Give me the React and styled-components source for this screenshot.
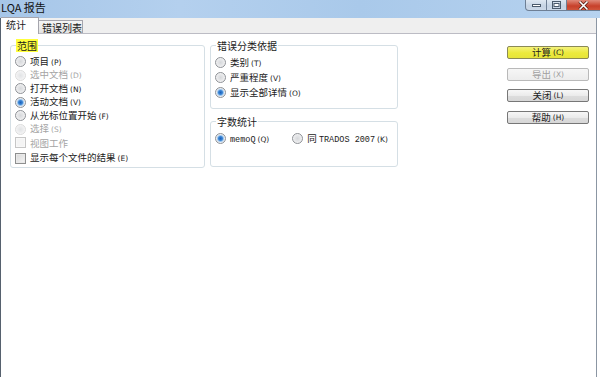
import React from "react";
import styled, { createGlobalStyle, css } from "styled-components";

const Global = createGlobalStyle`
  html, body {
    margin: 0;
    padding: 0;
    background: #ffffff;
  }
  body {
    font-family: "Noto Sans CJK SC", "DejaVu Sans", sans-serif;
    font-size: 9.5px;
    line-height: 12px;
    color: #1a1a1a;
  }
`;

const Window = styled.div`
  width: 600px;
  height: 377px;
  display: flex;
  flex-direction: column;
  overflow: hidden;
  background: #ffffff;
`;

const TitleBar = styled.div`
  height: 18px;
  flex: none;
  display: flex;
  align-items: flex-start;
  background: linear-gradient(90deg, #a6c6e8 0%, #b4d0ee 30%, #a9c9ea 60%, #b6d2ef 100%);
`;

const Title = styled.div`
  font-size: 11px;
  line-height: 14px;
  padding: 0 0 0 1px;
  white-space: nowrap;
  color: #111;
`;

const Controls = styled.div`
  margin-left: auto;
  display: flex;
  height: 11px;
`;

const CtrlBtn = styled.div`
  width: ${(p) => p.$w}px;
  height: 11px;
  box-sizing: border-box;
  border: 1px solid #6e7f95;
  border-top: none;
  border-left-width: ${(p) => (p.$first ? 1 : 0)}px;
  border-right: ${(p) => (p.$close ? "none" : "1px solid #6e7f95")};
  border-bottom-left-radius: ${(p) => (p.$first ? 4 : 0)}px;
  display: flex;
  align-items: center;
  justify-content: center;
  background: ${(p) =>
    p.$close
      ? "linear-gradient(#e08a7a, #c7402a 60%, #d0563c)"
      : "linear-gradient(#dfe8f3, #c5d3e4 60%, #ccd9e8)"};
`;

const Body = styled.div`
  flex: 1;
  display: flex;
  flex-direction: column;
  border-left: 1px solid #56616e;
  border-right: 1px solid #8b96a3;
  margin-right: 3px;
`;

const TabStrip = styled.div`
  height: 15px;
  flex: none;
  display: flex;
  align-items: flex-end;
  background: #efefef;
  border-bottom: 1px solid #bcbcc4;
`;

const Tab = styled.div`
  box-sizing: border-box;
  flex: none;
  white-space: nowrap;
  height: ${(p) => (p.$active ? 17 : 13)}px;
  font-size: 10px;
  line-height: 12px;
  display: flex;
  align-items: center;
  border: 1px solid #a5a5ad;
  border-left: none;
  border-bottom: none;
  ${(p) =>
    p.$active
      ? css`
          width: 38px;
          padding: 0 0 2px 5px;
          background: #ffffff;
          margin-bottom: -1px;
        `
      : css`
          width: 44px;
          padding: 1px 0 0 3px;
          background: linear-gradient(#f5f5f5, #e2e2e2);
        `}
`;

const Content = styled.div`
  flex: 1;
  display: flex;
  align-items: flex-start;
  padding: 5px 7px 0 9px;
`;

const Column = styled.div`
  display: flex;
  flex-direction: column;
  gap: ${(p) => p.$gap || 0}px;
  width: ${(p) => p.$w}px;
  margin-right: ${(p) => p.$mr || 0}px;
`;

const Group = styled.fieldset`
  margin: 0;
  padding: ${(p) => p.$pt || 2}px 0 ${(p) => p.$pb || 0}px 3px;
  border: 1px solid #d5dfe5;
  border-radius: 3px;
  min-height: ${(p) => p.$h}px;
  box-sizing: border-box;
`;

const Legend = styled.legend`
  padding: 0 1px;
  margin-left: 2px;
  font-size: 10px;
  line-height: 13px;
  background: ${(p) => (p.$hl ? "#ffff3c" : "transparent")};
  color: #1a1a1a;
`;

const Row = styled.div`
  display: flex;
  align-items: center;
  height: ${(p) => p.$h || 13.5}px;
  gap: 4px;
  white-space: nowrap;
  color: ${(p) => (p.$disabled ? "#a4a4a4" : "#1a1a1a")};
  margin-top: ${(p) => p.$mt || 0}px;
  margin-right: ${(p) => p.$mr || 0}px;
`;

const Inline = styled.div`
  display: flex;
  align-items: center;
`;

const Acc = styled.span`
  font-family: "DejaVu Sans", sans-serif;
  font-size: 7.5px;
  margin-left: 2px;
`;

const Mono = styled.span`
  font-family: "Liberation Mono", "DejaVu Sans Mono", monospace;
  font-size: 8.5px;
`;

const RadioDot = styled.span`
  width: 11px;
  height: 11px;
  box-sizing: border-box;
  border-radius: 50%;
  border: 1px solid ${(p) => (p.$disabled ? "#cdcdcd" : "#8e9196")};
  background: ${(p) =>
    p.$checked
      ? "radial-gradient(circle, #1d5fb8 0, #3b86d6 2px, #9cc4ec 3px, #e9eef3 4px)"
      : "radial-gradient(circle, #d6d8db 0, #e6e7e9 3px, #f6f6f6 5px)"};
  opacity: ${(p) => (p.$disabled ? 0.7 : 1)};
  flex: none;
  margin-left: 1px;
`;

const CheckBox = styled.span`
  width: 11px;
  height: 11px;
  box-sizing: border-box;
  border: 1px solid ${(p) => (p.$disabled ? "#c6c6c6" : "#8e8f8f")};
  background: ${(p) =>
    p.$disabled ? "#f4f4f4" : "linear-gradient(135deg, #d8d8d8, #f5f5f5)"};
  box-shadow: inset 0 0 0 1px ${(p) => (p.$disabled ? "#f8f8f8" : "#e9e9e9")};
  flex: none;
  margin-left: 1px;
`;

const Buttons = styled.div`
  margin-left: auto;
  display: flex;
  flex-direction: column;
  gap: 8.5px;
  padding-top: 7px;
`;

const Button = styled.div`
  width: 82px;
  height: 13px;
  box-sizing: border-box;
  border: 1px solid ${(p) => (p.$primary ? "#8b8a55" : p.$disabled ? "#b9b9b9" : "#777")};
  border-radius: 2px;
  display: flex;
  align-items: center;
  justify-content: center;
  font-size: 9.5px;
  line-height: 11px;
  color: ${(p) => (p.$disabled ? "#a0a0a0" : "#1a1a1a")};
  background: ${(p) =>
    p.$primary
      ? "linear-gradient(#f4f27a, #ecea3c 55%, #e6e43a)"
      : p.$disabled
      ? "linear-gradient(#f6f6f6, #ececec)"
      : "linear-gradient(#f7f7f7, #ebebeb 50%, #dddddd 51%, #d7d7d7)"};
`;

function Label({ text, acc }) {
  return (
    <span>
      {text}
      <Acc>({acc})</Acc>
    </span>
  );
}

const scope = [
  { text: "项目", acc: "P" },
  { text: "选中文档", acc: "D", disabled: true },
  { text: "打开文档", acc: "N" },
  { text: "活动文档", acc: "V", checked: true },
  { text: "从光标位置开始", acc: "F" },
  { text: "选择", acc: "S", disabled: true },
];

const errorBy = [
  { text: "类别", acc: "T" },
  { text: "严重程度", acc: "V" },
  { text: "显示全部详情", acc: "O", checked: true },
];

export default function App() {
  return (
    <Window>
      <Global />
      <TitleBar>
        <Title>LQA 报告</Title>
        <Controls>
          <CtrlBtn $w={22} $first>
            <svg width="9" height="3" viewBox="0 0 9 3">
              <rect x="0.5" y="0.5" width="8" height="2" fill="#fff" stroke="#4b5a6c" />
            </svg>
          </CtrlBtn>
          <CtrlBtn $w={20}>
            <svg width="9" height="8" viewBox="0 0 9 8">
              <rect x="0.5" y="0.5" width="8" height="7" fill="none" stroke="#4b5a6c" />
              <rect x="2" y="2.5" width="5" height="3" fill="#fff" stroke="#4b5a6c" />
            </svg>
          </CtrlBtn>
          <CtrlBtn $w={33} $close>
            <svg width="11" height="9" viewBox="0 0 11 9">
              <path d="M1.5 0.5 L9.5 8.5 M9.5 0.5 L1.5 8.5" stroke="#4a1a12" strokeWidth="3" />
              <path d="M1.5 0.5 L9.5 8.5 M9.5 0.5 L1.5 8.5" stroke="#fff" strokeWidth="1.6" />
            </svg>
          </CtrlBtn>
        </Controls>
      </TitleBar>
      <Body>
        <TabStrip>
          <Tab $active>统计</Tab>
          <Tab>错误列表</Tab>
        </TabStrip>
        <Content>
          <Column $w={195} $mr={5}>
            <Group $h={121} $pt={3} $pb={2}>
              <Legend $hl>范围</Legend>
              {scope.map((r) => (
                <Row key={r.text} $disabled={r.disabled}>
                  <RadioDot $checked={r.checked} $disabled={r.disabled} />
                  <Label text={r.text} acc={r.acc} />
                </Row>
              ))}
              <Row $disabled>
                <CheckBox $disabled />
                <span>视图工作</span>
              </Row>
              <Row $mt={2}>
                <CheckBox />
                <Label text="显示每个文件的结果" acc="E" />
              </Row>
            </Group>
          </Column>
          <Column $w={188} $gap={6}>
            <Group $h={70} $pt={3}>
              <Legend>错误分类依据</Legend>
              {errorBy.map((r) => (
                <Row key={r.text} $h={15}>
                  <RadioDot $checked={r.checked} />
                  <Label text={r.text} acc={r.acc} />
                </Row>
              ))}
            </Group>
            <Group $h={52} $pt={3}>
              <Legend>字数统计</Legend>
              <Inline>
                <Row $h={15} $mr={22}>
                  <RadioDot $checked />
                  <span>
                    <Mono>memoQ</Mono>
                    <Acc>(Q)</Acc>
                  </span>
                </Row>
                <Row $h={15}>
                  <RadioDot />
                  <span>
                    同 <Mono>TRADOS 2007</Mono>
                    <Acc>(K)</Acc>
                  </span>
                </Row>
              </Inline>
            </Group>
          </Column>
          <Buttons>
            <Button $primary>
              计算 <Acc>(C)</Acc>
            </Button>
            <Button $disabled>
              导出 <Acc>(X)</Acc>
            </Button>
            <Button>
              关闭 <Acc>(L)</Acc>
            </Button>
            <Button>
              帮助 <Acc>(H)</Acc>
            </Button>
          </Buttons>
        </Content>
      </Body>
    </Window>
  );
}
